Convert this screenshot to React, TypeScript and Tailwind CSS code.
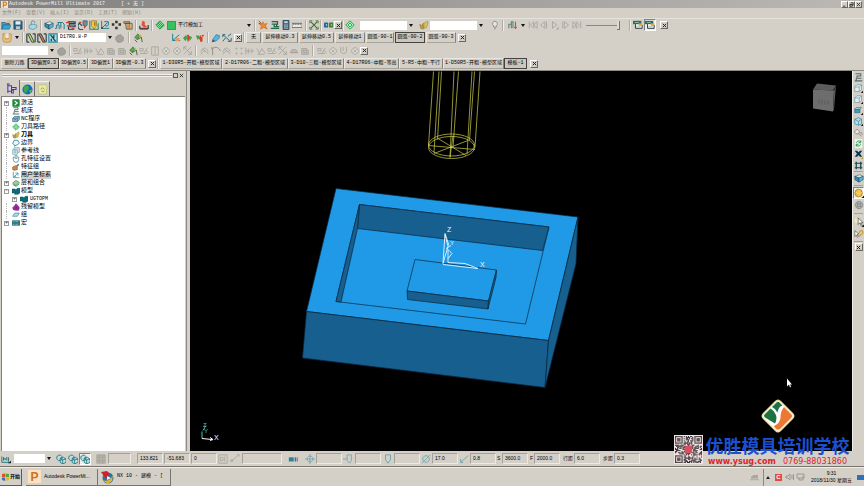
import type { ReactNode } from "react";
import clsx from "clsx";

const TEAL = "#1f7f95";
const DARK = "#1d3f55";
const GREY = "#a5a29c";

// All glyphs are drawn on a 12x12 grid
const glyphs: Record<string, ReactNode> = {
  app: (
    <>
      <rect width="12" height="12" fill="#f6e3c6" />
      <path d="M4 11V2h3a2.5 2.5 0 0 1 0 5H4" fill="none" stroke="#d27a1c" strokeWidth="2" />
    </>
  ),
  open: (
    <>
      <path d="M1 3h4l1 1h4v2H3l-2 5z" fill="#4aa3c4" stroke={DARK} strokeWidth=".7" />
      <path d="M3 6h9l-2 5H1z" fill="#39a4d6" stroke="#17618a" strokeWidth=".6" />
      <path d="M7 2l4-1v2" stroke="#e8b02c" fill="none" />
    </>
  ),
  save: (
    <>
      <path d="M1 1h9l1 1v9H1z" fill="#2a6180" stroke={DARK} strokeWidth=".7" />
      <rect x="3" y="1.5" width="6" height="4" fill="#e6ecee" />
      <rect x="3.5" y="7.5" width="5" height="3.5" fill="#b7cbd3" />
    </>
  ),
  lock: (
    <>
      <path d="M4 6V3a2 2 0 0 1 4 0v1" fill="none" stroke="#5f98a8" strokeWidth="1.2" />
      <path d="M1.5 6 6 5l4.5 1v3L6 11.5 1.5 10z" fill="#a5d6e6" stroke="#4b91a5" strokeWidth=".8" />
    </>
  ),
  block: (
    <>
      <path d="M1 4l6-2 4 2-5 2z" fill="#d7f0f5" stroke={DARK} strokeWidth=".6" />
      <path d="M1 4l5 2v5L1 8z" fill="#2f8fae" stroke={DARK} strokeWidth=".6" />
      <path d="M6 6l5-2v4l-5 3z" fill="#5fb5cc" stroke={DARK} strokeWidth=".6" />
    </>
  ),
  rapid: <path d="M0 10h2V6h2V3h5l2 2v6M7 3v7M5 6v5M3 3h3" fill="none" stroke={TEAL} strokeWidth="1.2" />,
  feed: (
    <>
      <path d="M2 2h9v2H4v2h7v2H3v3h7" fill="none" stroke={DARK} strokeWidth="1.3" />
      <path d="M0 3h5M1 7h5M7 10h3" stroke="#c9442c" strokeWidth="1.5" />
    </>
  ),
  toolred: (
    <>
      <path d="M6 1h5v5L9 8 6 6z" fill="#7d8f95" stroke={DARK} strokeWidth=".7" />
      <path d="M6 11A4 4 0 0 1 2 4l3 3" fill="none" stroke={DARK} strokeWidth="1.3" />
      <path d="M8 6v4M1 3h3" stroke="#d1402d" strokeWidth="1.6" />
    </>
  ),
  toolyel: (
    <>
      <path d="M3 1h6v6L6 11 3 7z" fill="#f2cb3a" stroke="#7d6a1d" strokeWidth=".7" />
      <path d="M1 1v10h10V4" fill="none" stroke="#2c8a5d" strokeWidth="1.3" />
      <path d="M7 2v5" stroke="#b3471f" strokeWidth="1.3" />
    </>
  ),
  axes: (
    <>
      <path d="M2 1v9h9M2 10l7-7M5 2h5v4M6 7h4" fill="none" stroke={TEAL} strokeWidth="1.2" />
      <circle cx="2.5" cy="9.5" r="1.2" fill="#2c4756" />
    </>
  ),
  nodes: <path d="M5 1h3v3H5zM9 4h3v3H9zM5 8h3v3H5zM1 4h3v3H1z" fill="#37312f" />,
  holder: (
    <>
      <path d="M1 2h7v2H1zM3 4h8v7H4z" fill="#d6b88a" stroke="#473c30" strokeWidth=".8" />
      <path d="M6 5v6M8 5v6" stroke="#b76a25" />
    </>
  ),
  simulate: (
    <>
      <path d="M1 7v3h10V6" fill="none" stroke={DARK} strokeWidth="1.4" />
      <path d="M4 1l3 1v4l3 2-4 1-3-3z" fill="#e0532f" />
      <path d="M1 11h10" stroke="#b63a2b" strokeWidth="1.4" />
    </>
  ),
  hatch: (
    <path
      d="M6 1l5 5-5 5-5-5zM3.5 3.5l5 5M5 2.5l5 5M2.5 5l4.5 4.5"
      fill="#8be59b"
      stroke="#169a39"
      strokeWidth="1.1"
    />
  ),
  square: <path d="M.5.5h11v11H.5z" fill="#38c25c" stroke="#1c8138" />,
  star: (
    <>
      <path d="M6 2l1.5 3 3.5-1-2 3 2 4-4-2-4 2 1-4-3-3 4 .5z" fill="#f08a24" stroke="#b8501c" strokeWidth=".5" />
      <path d="M1 1l3 3M1 4l2 1" stroke="#8d3b20" />
    </>
  ),
  machine: <path d="M2 2h7v3H5v3h6M1 10h10M8 5v3M2 5h2" fill="none" stroke="#23654b" strokeWidth="1.5" />,
  calc: (
    <>
      <path d="M2.5.5h7v11h-7z" fill="#547485" stroke={DARK} />
      <path d="M4 2.5h4" stroke="#fff" strokeWidth="1.5" />
      <path d="M4 6h4M4 8h4M4 10h4" stroke="#c9dbe2" strokeDasharray="1 .5" />
    </>
  ),
  ruler: <path d="M0 4h12v5H0zM2 4v2M4 4v2M6 4v2M8 4v2M10 4v2" fill="#e9e7e0" stroke="#4a4f50" strokeWidth=".8" />,
  cross: (
    <>
      <path d="M2 2l8 8M10 2l-8 8" stroke="#3e6b3d" strokeWidth="1.3" />
      <path d="M1 4V1h3M8 1h3v3M1 8v3h3M11 8v3H8" fill="none" stroke="#5b7d40" strokeWidth="1.2" />
    </>
  ),
  bino: (
    <>
      <rect y="3" width="5" height="6" rx="1" fill="#1e6a8f" />
      <rect x="6" y="3" width="5" height="6" rx="1" fill="#3c7e3c" />
      <circle cx="3" cy="6" r="1" fill="#cde7f0" />
      <circle cx="9" cy="6" r="1" fill="#f2d94c" />
    </>
  ),
  path: <path d="M6 1l5 5-5 5-5-5zM6 3.5L8.5 6 6 8.5 3.5 6z" fill="#b5efbe" stroke="#1fa546" strokeWidth="1.1" />,
  endmill: (
    <>
      <path d="M1 5l1 5 3 1 2-6-2-1-2 3z" fill="#b99a45" stroke="#86712c" strokeWidth=".6" />
      <path d="M6 4l4-3 1 2-2 6-3 1z" fill="#d9c05c" stroke="#9d822f" strokeWidth=".6" />
    </>
  ),
  bulb: (
    <path d="M6 1.5a3 3 0 0 1 1.5 5.5v1.5h-3V7A3 3 0 0 1 6 1.5zM5 10.5h2" fill="#e8e6e0" stroke="#7c7a75" strokeWidth=".9" />
  ),
  walk: (
    <>
      <path d="M1 10V5h3V2h2v8M4 5v5" fill="none" stroke="#5b8371" strokeWidth="1.3" />
      <path d="M9 2v6" stroke="#2e9c3c" strokeWidth="1.3" />
      <path d="M7 8h4l-2 3z" fill="#d33525" />
    </>
  ),
  first: <path d="M1.5 2v8M7 2L3 6l4 4zM11 2L7 6l4 4z" fill="none" stroke={GREY} />,
  back: <path d="M7 2L2 6l5 4zM9 2v8" fill="none" stroke={GREY} />,
  play: <path d="M3 2l5 4-5 4zM10 9v2H8z" fill="none" stroke={GREY} />,
  fwd: <path d="M2 2v8M4 2l5 4-5 4z" fill="none" stroke={GREY} />,
  last: <path d="M1 2l4 4-4 4zM5 2l4 4-4 4zM10.5 2v8" fill="none" stroke={GREY} />,
  panel: (
    <>
      <path d="M0 1h10v4H0z" fill="#2e6d63" />
      <path d="M3 5v5h8V6" fill="#f0ede3" stroke="#35424a" strokeWidth="1.2" />
      <path d="M2 3h5M4 8h5" stroke="#9cc5b0" />
      <path d="M7 4h4v3H7z" fill="#e7a22f" />
    </>
  ),
  cutter: (
    <>
      <path d="M1 1v7a3 3 0 0 0 3 3h4a3 3 0 0 0 3-3V1H8v6H4V1z" fill="#e9c27a" stroke="#b0803a" strokeWidth=".8" />
      <path d="M4 1v5h4V1" fill="#f3e8cf" />
    </>
  ),
  ballA: (
    <>
      <path d="M1 11V1M11 1v10M1 11h3M8 1h3" fill="none" stroke="#26454c" strokeWidth="1.4" />
      <path d="M2 1h3l5 10H7z" fill="#c5cf4f" stroke="#26454c" />
    </>
  ),
  ballB: (
    <>
      <path d="M1 11V1M11 1v10M1 11h3M8 1h3" fill="none" stroke="#26454c" strokeWidth="1.4" />
      <path d="M2 1h3l5 10H7z" fill="#d66b46" stroke="#26454c" />
    </>
  ),
  ballC: (
    <>
      <path d="M1 1h10v10H1z" fill="#a5dbe5" stroke="#2f8da2" strokeWidth="1.4" />
      <path d="M3 2l6 8M7 2v4M4 7v3" stroke="#1e3f49" strokeWidth="1.5" />
    </>
  ),
  blob: <path d="M3 3l4-1 3 3v4l-3 2H3L1 8V5z" fill="#a5a29c" stroke="#8d8a84" strokeWidth=".8" />,
  hand: (
    <>
      <path d="M2 5l4-4 2 3-3 4z" fill="#5aa44b" stroke="#2c6b30" strokeWidth=".7" />
      <path d="M5 8l5-3 1 6M2 8l3 3" fill="none" stroke="#4b6c3a" strokeWidth="1.2" />
      <path d="M9 2v3" stroke="#e3b52d" strokeWidth="1.5" />
    </>
  ),
  wpA: (
    <>
      <path d="M2 1v8h9M2 9l8-7" fill="none" stroke={TEAL} strokeWidth="1.2" />
      <path d="M5 6h5v4H5z" fill="#de9f65" />
    </>
  ),
  wpB: (
    <>
      <path d="M0 6l4-4 1 4-2 4zM7 3l4 2-3 5z" fill="#37a447" />
      <path d="M5 2h2l1 5-2 4-1-3z" fill="#d93a2b" />
    </>
  ),
  wpC: (
    <>
      <path d="M1 3h4l1 3-3 2z" fill="#39a548" />
      <path d="M6 3l5-1-2 4v4l-2 1-2-4z" fill="#d93a2b" />
      <path d="M7 3l2 2" stroke="#fff" />
    </>
  ),
  pencil: (
    <>
      <path d="M2 8l4-6 4 1v3L6 10z" fill="#5db2e2" stroke="#2377a0" strokeWidth=".8" />
      <path d="M1 11l1-3 3 2z" fill="#1e3c50" />
    </>
  ),
  tri: <path d="M1 2l9 8M1 10l3-4M7 4l4-3M7 10h4V6M1 5V2h3" fill="none" stroke="#2d6d7d" strokeWidth="1.2" />,
  g1: <path d="M1 3h4v3H1zM6 9l4-7M1 9h9M8 5l3 3" fill="none" stroke={GREY} />,
  g2: <path d="M1 2v8M1 6h9M7 3l3 3-3 3M4 3v6" fill="none" stroke={GREY} />,
  g3: <path d="M1 3l3 6 3-6 4 6M2 10h8" fill="none" stroke={GREY} />,
  g4: <path d="M2 3h6l2 2v5H2zM4 5h4v3H4z" fill="#c0bdb6" stroke={GREY} />,
  g5: <path d="M2 1h8v10H2zM6 1v10" fill="none" stroke={GREY} />,
  g6: <path d="M6 2a4 4 0 1 0 .1 0M4 4l4 4M4 8l4-4" fill="#dedbd4" stroke={GREY} />,
  g7: <path d="M1 1l9 9M10 1l-9 9M1 5V1h4M6 10h4V6" fill="none" stroke={GREY} />,
  g8: <path d="M1 7c3-6 6-6 9 0M1 10c3-5 6-5 9 0M3 3l4 4" fill="none" stroke={GREY} />,
  g9: <path d="M2 11V3c4-3 8-1 9 3M1 1v3" fill="none" stroke="#85827d" />,
  g10: <path d="M2 2h2v2H2zM8 2h2v2H8zM2 8h2v2H2zM8 8h2v2H8z" fill={GREY} />,
  g11: <path d="M1 8h10M2 8a4 4 0 0 1 8 0z" fill="#bcb9b3" stroke={GREY} />,
  g12: <path d="M2 1v6a4 4 0 0 0 7 0V1M5 1v5" fill="none" stroke={GREY} />,
  tree: <path d="M1 1h3M2 1v10M2 9h4M2 3h4v3M6 8h2v3H6zM6 5h5v2H6z" fill="none" stroke="#4a37a8" strokeWidth="1.1" />,
  globe: (
    <>
      <circle cx="6" cy="6" r="5.5" fill="#1769b5" />
      <path d="M3 2c3-1 6 1 4 4S5 10 4 10 0 6 3 2z" fill="#38a653" />
      <path d="M8 7l3-1-2 4z" fill="#6fc45f" />
    </>
  ),
  bin: (
    <>
      <path d="M1 1h10l-1 10H2z" fill="#e9eba5" stroke="#bcbf72" strokeWidth=".8" />
      <path d="M4 6l2-2 2 2M5 8h3" fill="none" stroke="#74a251" />
    </>
  ),
  active: (
    <>
      <rect x=".5" y=".5" width="11" height="11" rx="1" fill="#1f8b38" />
      <path d="M4 3l4 3-4 3" fill="none" stroke="#fff" strokeWidth="1.6" />
    </>
  ),
  mach2: <path d="M2 1h7v3H4v3h6M1 10.5h10M3 7v3" fill="none" stroke="#50676d" strokeWidth="1.4" />,
  nc: <path d="M1 5l3-3h7v5l-3 3H1zM1 5h7v5M8 5l3-3M3 7h3" fill="#8cbccb" stroke="#2a6479" strokeWidth=".9" />,
  loop: <path d="M3 2h6l2 4-3 3H6l-2 2V9L1 7z" fill="#eaf7fa" stroke="#2b8296" strokeWidth="1.2" />,
  pattern: <path d="M1 4h7v7H1zM3 4V1h8v7H8M3 6h3M3 8h3" fill="#d9ebef" stroke="#5a93a1" strokeWidth=".9" />,
  hole: <path d="M2 3h8M2 3v4a4 4 0 0 0 8 0V3M4 1h4M4 5h4" fill="none" stroke="#44707e" />,
  feature: (
    <>
      <path d="M1 6l4-2 3 2v4l-4 1-3-1z" fill="#cf8a38" stroke="#7b4c19" strokeWidth=".8" />
      <path d="M6 4l3-3 2 2-3 3z" fill="#4b8798" />
    </>
  ),
  ucs: <path d="M2 1v9h9M2 10l7-7M5 3h4v4M5 9V6" fill="none" stroke="#4d91a8" strokeWidth="1.2" />,
  layers: (
    <>
      <path d="M1 6l5-4 5 3-5 5z" fill="#9fd087" stroke="#396f46" strokeWidth=".8" />
      <path d="M1 8l5 3 5-4" fill="none" stroke="#2c7c8e" strokeWidth="1.3" />
    </>
  ),
  model: <path d="M0 3h5v2l3-3h4v7l-3 2H4V9H0z" fill="#0c6d78" stroke="#064b58" strokeWidth=".7" />,
  stock: (
    <path d="M6 1l3 3 2 3-1 4H6L2 10 1 7l3-3zM4 5l4 4M8 5L5 9" fill="#9c2ca8" stroke="#631a72" strokeWidth=".8" />
  ),
  group: <path d="M1 8l3-5h7l-3 5z" fill="#a8dcea" stroke="#2b7f98" strokeWidth=".9" />,
  macro: (
    <>
      <path d="M0 2h12v8H0z" fill="#2e7a82" />
      <path d="M2 4h8M2 8h8" stroke="#cde8e8" strokeDasharray="1 1" />
    </>
  ),
  cube: (
    <>
      <path d="M1 4l3-3h6v6l-3 3H1zM1 4h6v6M7 4l3-3" fill="#e0eef0" stroke="#5f8c96" strokeWidth=".8" />
      <path d="M12 9v3H9z" fill="#111" />
    </>
  ),
  cubeTop: (
    <>
      <path d="M1 4h7v5H1z" fill="#35a0c8" stroke="#37616d" strokeWidth=".8" />
      <path d="M1 4l2-2h7L8 4z" fill="#d9eef3" stroke="#37616d" strokeWidth=".8" />
      <path d="M12 9v3H9z" fill="#111" />
    </>
  ),
  iso: (
    <>
      <path d="M6 1l4 2v6l-4 2-5-2V3zM1 3l5 3 4-3M6 6v5" fill="#b7e3f0" stroke="#2780a1" strokeWidth=".9" />
      <path d="M12 9v3H9z" fill="#111" />
    </>
  ),
  zoom: <path d="M4 2a3 3 0 1 0 .1 0M6 7l4 4M8 7l2-1 1 3" fill="#e9e7e2" stroke="#77756f" />,
  refresh: (
    <>
      <rect x="1" y="0" width="10" height="12" fill="#edf5ec" />
      <path d="M3 5c1-3 5-3 6-1M9 2v3H6M9 7c-1 3-5 3-6 1M3 10V7h3" fill="none" stroke="#249448" strokeWidth="1.3" />
    </>
  ),
  xblue: (
    <>
      <path d="M1 1h3l2 2 2-2h3L8 5l3 4H8L6 7 4 9H1l3-4z" fill="#0d3352" />
      <path d="M12 9v3H9z" fill="#b8a325" />
    </>
  ),
  frame: <path d="M3 3h6v6H3zM1 3h2V1M9 1v2h2M1 9h2v2M11 9H9v2" fill="none" stroke="#0d4250" strokeWidth="1.6" />,
  shade: (
    <>
      <circle cx="5.5" cy="6" r="4.5" fill="#f0bd3b" stroke="#b0791e" />
      <path d="M2 5c3 2 5 2 8 0M6 2v8" fill="none" stroke="#fae49a" strokeWidth=".7" />
      <path d="M12 9v3H9z" fill="#111" />
    </>
  ),
  wire: (
    <path
      d="M6 1.5a4.5 4.5 0 1 0 .1 0M1.5 6h9M6 1.5v9M4 2v8M8 2v8M2 4h8M2 8h8"
      fill="none"
      stroke="#72777b"
      strokeWidth=".7"
    />
  ),
  select: (
    <>
      <path d="M1 2h5v5H1z" fill="#f1e9bb" />
      <path d="M5 1v8l2-2 2 4 1-1-2-3h3z" fill="#fff" stroke="#443f35" strokeWidth=".8" />
      <path d="M12 9v3H9z" fill="#111" />
    </>
  ),
  selkey: (
    <>
      <path d="M1 2v7l2-2 1 3 1-1-1-3h2z" fill="#fff" stroke="#544c3b" strokeWidth=".8" />
      <path d="M7 5a2 2 0 1 1 2 1L6 9" fill="none" stroke="#d0a02c" strokeWidth="1.5" />
    </>
  ),
  wp: (
    <>
      <path d="M1 10V3M1 10h10M3 8V4l2 3 2-3v4M9 4v5" fill="none" stroke="#2f7c85" strokeWidth="1.2" />
      <path d="M8 11h4V8z" fill="#222" />
    </>
  ),
  planes: (
    <path
      d="M1 3l4-2 2 2v4L3 8 1 6zM5 5l4-1 3 2v4l-4 2-3-2zM5 5l3 2 4-1M8 7v5"
      fill="#bfe2e4"
      stroke="#1e7580"
    />
  ),
  grid: <path d="M1 1h10v10H1zM4 1v10M8 1v10M1 4h10M1 8h10" fill="#b8b5ae" stroke={GREY} />,
  lines: <path d="M1 1h10v10H1zM3 4h3v4H3zM8 3v6" fill="none" stroke={GREY} />,
  diag: <path d="M1 7h2v2H1zM3 8l6-6M8 1h3v2" fill="none" stroke={GREY} />,
  speed: (
    <>
      <path d="M1 4h5v5H1z" fill="#2e8094" />
      <path d="M7 4v5M9 4v5M11 4v5" stroke="#1f5a8c" />
    </>
  ),
  target: <path d="M6 2.5a3.5 3.5 0 1 0 .1 0M6 0v12M0 6h12" fill="none" stroke="#6ba3ad" />,
  gauge: <path d="M0 6h5M5 1h5v7l-2 3-3-3z" fill="none" stroke="#6ba3ad" />,
  tip: <path d="M3 1h6v6l-3 4-3-4z" fill="none" stroke="#6ba3ad" strokeWidth="1.1" />,
  dia: <path d="M6 2a4 4 0 1 0 .1 0M1 11L11 1" fill="none" stroke="#6ba3ad" />,
  radius: <path d="M2 6v4h3M2 10l9-8" fill="none" stroke="#6ba3ad" strokeWidth="1.1" />,
};

function Glyph({ name, className = "size-[11px]" }: { name: string; className?: string }) {
  return (
    <svg viewBox="0 0 12 12" className={clsx("shrink-0", className)} aria-hidden="true">
      {glyphs[name]}
    </svg>
  );
}

interface ToolProps {
  icon: string;
  w?: string;
  pressed?: boolean;
}

function Tool({ icon, w = "w-3", pressed }: ToolProps) {
  return (
    <button
      aria-label={icon}
      className={clsx(
        "flex h-3 shrink-0 items-center justify-center",
        w,
        pressed && "border border-t-[#808080] border-l-[#808080] border-r-white border-b-white bg-[#efede8]"
      )}
    >
      <Glyph name={icon} className="size-[10px]" />
    </button>
  );
}

const Tools = ({ icons, w }: { icons: string[]; w?: string }) => (
  <>
    {icons.map((icon, i) => (
      <Tool key={i} icon={icon} w={w} />
    ))}
  </>
);

// Groove between two tool groups
const Sep = ({ w = "w-1" }: { w?: string }) => (
  <span className={clsx("flex h-[11px] shrink-0 justify-center", w)}>
    <span className="w-px bg-[#b0aca4]" />
    <span className="w-px bg-[#efede9]" />
  </span>
);

const Gap = ({ w }: { w: string }) => <span className={clsx("shrink-0", w)} />;

function CloseX() {
  return (
    <button
      aria-label="close"
      className="flex size-2 shrink-0 items-center justify-center border border-t-white border-l-white border-r-[#6b6862] border-b-[#6b6862] bg-[#d4d0c8]"
    >
      <svg viewBox="0 0 6 6" className="size-[5px]">
        <path d="M1 1l4 4M5 1L1 5" stroke="#222" strokeWidth="1.2" />
      </svg>
    </button>
  );
}

const Arrow = ({ w = "w-2" }: { w?: string }) => (
  <span className={clsx("pointer-events-none flex shrink-0 items-center justify-center", w)}>
    <svg viewBox="0 0 4 3" className="h-[3px] w-1">
      <path d="M0 0h4L2 3z" fill="#111" />
    </svg>
  </span>
);

function Combo({ label, value = "", w }: { label: string; value?: string; w: string }) {
  return (
    <>
      <select
        aria-label={label}
        className={clsx("h-[9px] shrink-0 appearance-none bg-white pl-[2px] leading-[9px] text-black", w)}
      >
        <option>{value}</option>
      </select>
      <Arrow />
    </>
  );
}

function TextButton({ text, w, pressed }: { text: string; w: string; pressed?: boolean }) {
  return (
    <button
      className={clsx(
        "flex h-[11px] shrink-0 items-center justify-center border whitespace-nowrap text-black",
        w,
        pressed
          ? "border-[#45423e] bg-[#cbc7bf]"
          : "border-t-[#e9e7e2] border-l-[#e9e7e2] border-r-[#85827b] border-b-[#a8a49c]"
      )}
    >
      {text}
    </button>
  );
}

const editButtons = [
  { text: "无", w: "w-[15px]" },
  { text: "延伸移动0.3", w: "w-[36px]" },
  { text: "延伸移动0.5", w: "w-[35px]" },
  { text: "延伸移动1", w: "w-[30px]" },
  { text: "圆弧-90-1", w: "w-[28px]" },
  { text: "圆弧-90-2", w: "w-[30px]", pressed: true },
  { text: "圆弧-90-3", w: "w-[30px]" },
];

const offsetButtons = [
  { text: "删除刀路", w: "w-[27px]" },
  { text: "3D偏置0.3", w: "w-[31px]", pressed: true },
  { text: "3D偏置0.5", w: "w-[29px]" },
  { text: "3D偏置1", w: "w-[25px]" },
  { text: "3D偏置-0.3", w: "w-[33px]" },
];

const templateButtons = [
  { text: "1-D30R5-开粗-模型区域", w: "w-[62px]" },
  { text: "2-D17R06-二粗-模型区域", w: "w-[66px]" },
  { text: "3-D10-三粗-模型区域", w: "w-[56px]" },
  { text: "4-D17R06-中粗-等高", w: "w-[55px]" },
  { text: "5-R5-中粗-平行", w: "w-[44px]" },
  { text: "1-D50R5-开粗-模型区域", w: "w-[61px]" },
  { text: "模板-1", w: "w-[23px]", pressed: true },
];

const menus = ["文件(F)", "查看(V)", "插入(I)", "显示(D)", "工具(T)", "帮助(H)"];

const treeItems = [
  { icon: "active", text: "激活", box: "+" },
  { icon: "mach2", text: "机床" },
  { icon: "nc", text: "NC程序" },
  { icon: "path", text: "刀具路径" },
  { icon: "endmill", text: "刀具", box: "+", bold: true },
  { icon: "loop", text: "边界" },
  { icon: "pattern", text: "参考线" },
  { icon: "hole", text: "孔特征设置" },
  { icon: "feature", text: "特征组" },
  { icon: "ucs", text: "用户坐标系", selected: true },
  { icon: "layers", text: "层和组合", box: "+" },
  { icon: "model", text: "模型", box: "-" },
  { icon: "model", text: "UGTOPM", box: "+", child: true },
  { icon: "stock", text: "残留模型" },
  { icon: "group", text: "组" },
  { icon: "macro", text: "宏", box: "+" },
];

function Toolbars() {
  return (
    <div className="flex flex-col">
      <div className="flex h-[13px] items-center border-t border-[#e6e3dd]">
        <Tool icon="open" />
        <Tool icon="save" w="w-[11px]" />
        <Sep />
        <Tool icon="lock" />
        <Sep />
        <Tools icons={["block", "rapid", "feed"]} w="w-[11px]" />
        <Gap w="w-px" />
        <Tools icons={["toolred", "toolyel", "axes"]} w="w-[11px]" />
        <Tools icons={["nodes", "holder"]} />
        <Sep />
        <Tool icon="simulate" />
        <Sep />
        <Tool icon="hatch" />
        <Glyph name="square" className="ml-px size-[9px]" />
        <select
          aria-label="策略"
          className="ml-[2px] h-[11px] w-[67px] shrink-0 appearance-none leading-[11px] text-black"
        >
          <option>平行模加工</option>
        </select>
        <Arrow />
        <Sep />
        <Tools icons={["star", "machine"]} />
        <Tool icon="calc" w="w-[9px]" />
        <Tool icon="ruler" w="w-[14px]" />
        <Sep />
        <Tool icon="cross" w="w-[11px]" />
        <Sep />
        <Tool icon="bino" w="w-[11px]" />
        <CloseX />
        <Sep w="w-[2px]" />
        <Tool icon="path" />
        <Gap w="w-1" />
        <Combo label="刀具路径" w="w-[47px]" />
        <Gap w="w-[3px]" />
        <Tool icon="endmill" />
        <Combo label="刀具" w="w-[47px]" />
        <Gap w="w-1" />
        <Tool icon="bulb" />
        <Sep />
        <Gap w="w-[2px]" />
        <Tool icon="walk" />
        <Arrow />
        <Tools icons={["first", "back", "play", "fwd", "last"]} w="w-[11px]" />
        <input
          type="range"
          aria-label="速度"
          defaultValue={100}
          className="ml-1 h-[9px] w-[34px] shrink-0 appearance-none bg-[linear-gradient(#8b8882,#8b8882)] bg-[length:100%_1px] bg-center bg-no-repeat [&::-webkit-slider-thumb]:h-[9px] [&::-webkit-slider-thumb]:w-[3px] [&::-webkit-slider-thumb]:appearance-none [&::-webkit-slider-thumb]:border-r [&::-webkit-slider-thumb]:border-b [&::-webkit-slider-thumb]:border-[#77746e] [&::-webkit-slider-thumb]:bg-[#dedbd4]"
        />
        <Gap w="w-2" />
        <Sep />
        <Tool icon="panel" />
        <Tool icon="panel" pressed />
        <Gap w="w-1" />
        <CloseX />
      </div>

      <div className="flex h-[13px] items-center">
        <Gap w="w-px" />
        <Tool icon="cutter" />
        <Arrow />
        <Sep />
        <Tools icons={["ballA", "ballB", "ballC"]} w="w-[11px]" />
        <Combo label="当前刀具" value="D17R0.8-P" w="w-[48px]" />
        <Tool icon="blob" />
        <Sep w="w-[6px]" />
        <Tool icon="hand" />
        <Gap w="w-[26px]" />
        <Tools icons={["wpA", "wpB", "wpC"]} />
        <Sep />
        <Tools icons={["pencil", "tri"]} w="w-[11px]" />
        <Gap w="w-[2px]" />
        <CloseX />
        <Sep />
        <div className="flex gap-px">
          {editButtons.map((b) => (
            <TextButton key={b.text} {...b} />
          ))}
        </div>
        <Gap w="w-[2px]" />
        <CloseX />
      </div>

      <div className="flex h-[13px] items-center">
        <Gap w="w-[2px]" />
        <Combo label="工作平面" w="w-[46px]" />
        <Tool icon="blob" />
        <Sep />
        <Tools icons={["g1", "g2", "g3", "g4", "g4", "hand"]} w="w-[11px]" />
        <Tools icons={["g1", "g5", "g6", "g6", "g7"]} w="w-[11px]" />
        <Sep w="w-[6px]" />
        <Tools icons={["g8", "g9", "g8"]} w="w-[11px]" />
        <Gap w="w-px" />
        <Tools icons={["g10", "g2", "g3", "g1", "g7", "g11", "g4"]} w="w-[11px]" />
        <Sep w="w-[6px]" />
        <Tools icons={["g1", "g6", "g12", "g6"]} w="w-[11px]" />
        <CloseX />
      </div>

      <div className="flex h-[14px] items-center border-b border-[#8c8983]">
        <Gap w="w-px" />
        <div className="flex">
          {offsetButtons.map((b) => (
            <TextButton key={b.text} {...b} />
          ))}
        </div>
        <Gap w="w-[2px]" />
        <CloseX />
        <Sep />
        <div className="flex">
          {templateButtons.map((b) => (
            <TextButton key={b.text} {...b} />
          ))}
        </div>
        <Gap w="w-[3px]" />
        <CloseX />
      </div>
    </div>
  );
}

function Explorer() {
  return (
    <aside className="flex w-[187px] shrink-0 flex-col border-r border-[#8d8a84] pl-px">
      <div className="flex h-[9px] items-center gap-px pr-[2px] pl-px">
        <div className="h-[3px] grow border-y border-[#f4f2ee] bg-[#a9a59d]" />
        <button aria-label="dock" className="size-[5px] border border-[#5e5b56]" />
        <button aria-label="close" className="size-[5px]">
          <svg viewBox="0 0 6 6" className="size-full">
            <path d="M1 1l4 4M5 1L1 5" stroke="#222" />
          </svg>
        </button>
      </div>
      <div className="flex h-4 items-end pl-[2px]">
        {["tree", "globe", "bin"].map((tab, i) => (
          <button
            key={tab}
            aria-label={tab}
            className={clsx(
              "flex items-center justify-center border-r border-[#6f6c66]",
              i === 0 ? "h-4 w-[17px]" : "h-[15px] w-[15px] border-t border-t-[#f4f2ee]"
            )}
          >
            <Glyph name={tab} />
          </button>
        ))}
      </div>
      <ul className="mr-px flex grow flex-col border-t border-l border-[#85827c] bg-white pt-[2px] text-[6px] text-black">
        {treeItems.map((item, i) => (
          <li key={i} className={clsx("flex h-2 items-center", item.child ? "pl-[10px]" : "pl-[2px]")}>
            <span className="flex w-2 items-center">
              {item.box ? (
                <button
                  aria-label="toggle"
                  className="flex size-[5px] items-center justify-center border border-[#9b9b9b] text-[5px] leading-none text-[#333]"
                >
                  {item.box}
                </button>
              ) : (
                <span className="ml-[2px] h-2 w-0 border-l border-dotted border-[#b5b5b5]" />
              )}
            </span>
            <Glyph name={item.icon} className="size-2" />
            <span
              className={clsx(
                "ml-px leading-[8px] whitespace-nowrap",
                item.bold && "font-bold",
                item.selected && "bg-[#d4d0c8]",
                item.child && "pl-px text-[5px]"
              )}
            >
              {item.text}
            </span>
          </li>
        ))}
      </ul>
    </aside>
  );
}

function Viewport() {
  return (
    <main className="min-w-0 grow bg-black">
      <svg
        viewBox="190 72 662 379"
        className="size-full"
        fontFamily="'Liberation Sans', sans-serif"
        fontSize="7"
        strokeLinejoin="round"
      >
        {/* Block with pocket */}
        <g stroke="#082840" strokeWidth=".7">
          <path d="M336 189L578 217.5 548.5 341 306.5 312z" fill="#209ae6" />
          <path d="M306.5 312L548.5 341 545 388 302.5 358.5z" fill="#175f8e" />
          <path d="M578 217.5L576 264 545 388 548.5 341z" fill="#175f8e" />
          <path d="M359.5 205L549 227.5 525.5 324.5 336 302z" fill="#209ae6" />
          <path d="M359.5 205L549 227.5 542.5 251 357.5 229z" fill="#175f8e" />
          <path d="M359.5 205L357.5 229 341 302.5 336 302z" fill="#175f8e" />
          <path d="M415 260L496.5 270.5 488.5 301.5 407 291.5z" fill="#209ae6" />
          <path d="M407 291.5L488.5 301.5 488 309.5 407.5 300z" fill="#175f8e" />
          <path d="M496.5 270.5L496 278 488 309.5 488.5 301.5z" fill="#175f8e" />
        </g>

        {/* Wireframe tool */}
        <g fill="none" stroke="#d3d34c" strokeWidth=".7">
          <path d="M433.5 72L428.5 146M439 72L434 153M441.5 72L437.5 140M454 72L450 158M458.5 72L453 148M472 72L467 155M474.5 72L469.5 141M480 72L475 148" />
          <ellipse cx="451.5" cy="148" rx="23" ry="11" />
          <ellipse cx="451.5" cy="145.5" rx="23" ry="11" />
          <path d="M428.5 146L475 150M434 154L468 141M438 139L466 156M450 158L453 136M451 148h1" />
        </g>

        {/* Workplane axes */}
        <g fill="none" stroke="#e9f6ff" strokeWidth=".9">
          <path d="M443 264L445 234 449 246M443 264L448 247 445 235M443 265L478 269 465 264 448 263M448 263V250l4 4-4 5M446 249l5-3" />
        </g>
        <g fill="#e9f6ff">
          <text x="447" y="232">Z</text>
          <text x="450" y="245" fontSize="6">Y</text>
          <text x="480" y="267">X</text>
        </g>

        {/* Corner triad */}
        <path d="M202 439V432M203 431l3-5" stroke="#4cc7b4" fill="none" />
        <path d="M202 439l10 1M210 438l3 2-3 1" stroke="#fff" fill="none" />
        <text x="203" y="427" fill="#4cc7b4" fontSize="6">Z</text>
        <text x="204" y="433" fill="#4cc7b4" fontSize="6">Y</text>
        <text x="214" y="440" fill="#fff">X</text>

        {/* View cube */}
        <path d="M817 84l19 2-3 5-20-1z" fill="#5c5c5c" />
        <path d="M813 90l21 1-1 21-20-3z" fill="#6d6d6d" />
        <path d="M834 91l2-5-2 24-1 2z" fill="#575757" />
        <path d="M819 100v5M822 100v5M825 101v4M828 101v4" stroke="#5a5a5a" />

        <path d="M787 379v8l2-2 1 3 1-1-1-2h2z" fill="#fff" />
      </svg>
    </main>
  );
}

function ViewBar() {
  return (
    <div className="flex w-3 shrink-0 flex-col items-center border-l border-[#efede8] pt-px">
      {["mach2", "cube", "cube", "cubeTop", "iso", "zoom", "refresh", "xblue", "frame"].map((icon, i) => (
        <button key={i} aria-label={icon} className="flex h-[11px] items-center">
          <Glyph name={icon} className="size-[9px]" />
        </button>
      ))}
      <hr className="w-[9px] border-[#a5a19a]" />
      <Tool icon="block" w="w-[11px]" />
      <hr className="my-px w-[9px] border-[#a5a19a]" />
      <Tool icon="shade" w="w-[11px]" pressed />
      <Tool icon="wire" w="w-[11px]" />
      <hr className="my-[2px] w-[9px] border-[#a5a19a]" />
      <Tool icon="select" w="w-[11px]" />
      <Tool icon="selkey" w="w-[11px]" />
      <hr className="my-px w-[9px] border-[#a5a19a]" />
      <CloseX />
    </div>
  );
}

function Field({ label, value = "", w = "w-[26px]" }: { label: string; value?: string; w?: string }) {
  return (
    <input
      aria-label={label}
      readOnly
      value={value}
      className={clsx(
        "h-[11px] shrink-0 border border-t-[#a5a199] border-l-[#a5a199] border-r-[#eceae5] border-b-[#eceae5] bg-transparent pb-[2px] pl-[2px] leading-none",
        w
      )}
    />
  );
}

function StatusBar() {
  return (
    <div className="flex h-4 shrink-0 items-center border-b border-[#77746e] font-['Liberation_Sans','Noto_Sans_CJK_SC',sans-serif] text-black">
      <Tool icon="wp" />
      <Gap w="w-[2px]" />
      <Combo label="用户坐标系" w="w-[31px]" />
      <Gap w="w-[2px]" />
      <Tools icons={["planes", "planes"]} />
      <Tool icon="planes" pressed />
      <Gap w="w-1" />
      <Tool icon="grid" />
      <Gap w="w-px" />
      <Field label="网格" w="w-[23px]" />
      <Gap w="w-[6px]" />
      <Field label="X" value="133.821" />
      <Gap w="w-px" />
      <Field label="Y" value="-51.683" />
      <Gap w="w-px" />
      <Field label="Z" value="0" />
      <Tools icons={["lines", "diag"]} />
      <Gap w="w-px" />
      <Field label="距离" w="w-[40px]" />
      <Gap w="w-[5px]" />
      <Tool icon="speed" />
      <Gap w="w-[5px]" />
      <Tool icon="target" />
      <Field label="公差" />
      <Tool icon="gauge" />
      <Gap w="w-px" />
      <Field label="余量" />
      <Gap w="w-px" />
      <Tool icon="tip" />
      <Field label="刀尖" />
      <Tool icon="dia" />
      <Field label="直径" value="17.0" />
      <Tool icon="radius" />
      <Field label="刀尖半径" value="0.8" />
      <span className="w-[6px] pl-px">S</span>
      <Field label="转速" value="3600.0" />
      <span className="w-[6px] pl-[2px]">F</span>
      <Field label="进给" value="2000.0" />
      <span className="w-[14px] pl-[3px] whitespace-nowrap">行距</span>
      <Field label="行距" value="6.0" />
      <span className="w-[14px] pl-[3px] whitespace-nowrap">步距</span>
      <Field label="步距" value="0.3" />
    </div>
  );
}

function TaskBar() {
  return (
    <footer className="flex h-[19px] shrink-0 items-center border-t border-[#efede8] font-['Liberation_Sans','Noto_Sans_CJK_SC',sans-serif] text-black">
      <button className="flex h-[17px] w-[22px] items-center gap-px border-r border-b border-[#5d5a55] pl-px font-bold whitespace-nowrap">
        <svg viewBox="0 0 8 8" className="size-2 shrink-0">
          <path d="M1 1l3-.5V4H1z" fill="#d9572c" />
          <path d="M4.5.5L8 1v3H4.5z" fill="#5ca437" />
          <path d="M1 4.5h3V8L1 7z" fill="#3a72c2" />
          <path d="M4.5 4.5H8V7l-3.5 1z" fill="#e3b72b" />
        </svg>
        开始
      </button>
      <button className="ml-1 flex h-[17px] w-[72px] items-center border-r border-b border-[#77746e] pl-[2px] whitespace-nowrap">
        <span className="mr-[3px] flex size-[13px] items-center justify-center bg-[#fae3c4] text-[12px] leading-none font-bold text-[#cf7416]">
          P
        </span>
        Autodesk PowerMi...
      </button>
      <button className="flex h-[17px] w-[73px] items-center border-r border-b border-[#77746e] pl-[2px] font-['Liberation_Mono','Noto_Sans_CJK_SC',monospace] whitespace-nowrap">
        <svg viewBox="0 0 14 14" className="mr-[3px] size-[14px]">
          <circle cx="8" cy="8" r="5.5" fill="#2179a8" />
          <path d="M2 10c4 2 9 0 11-5l-1 6-4 3z" fill="#e8b22e" />
          <path d="M1 2l6-1 3 3-4 5z" fill="#c9242d" />
          <path d="M7 6l4 2-4 2z" fill="#e9f3f4" />
        </svg>
        NX 10 - 建模 - [
      </button>

      <div className="ml-auto flex h-full items-center">
        <svg viewBox="0 0 10 8" className="mr-1 h-[7px] w-[9px]">
          <path d="M1 3l3-2h5v4H1zM0 6h10v1H0z" fill="#a9a69f" />
        </svg>
        <div className="flex h-[17px] items-center border-l border-[#8b8882] pl-[2px]">
          <svg viewBox="0 0 4 3" className="h-[3px] w-1">
            <path d="M0 3h4L2 0z" fill="#222" />
          </svg>
          <span className="ml-[5px] flex size-[7px] items-center justify-center bg-[#e14a45] text-[6px] leading-none font-bold text-white">
            C
          </span>
          <svg viewBox="0 0 20 8" className="ml-[3px] h-2 w-5" fill="none" stroke="#96938d" strokeWidth=".9">
            <path d="M1 3h2l2-2v6L3 5H1zM7 2v4M8.5 1v6M12 1h7v4h-7zM14 5v2h4V3" />
          </svg>
          <div className="ml-[3px] flex w-[47px] flex-col items-center leading-[7px] whitespace-nowrap">
            <span>9:31</span>
            <span>2018/11/30 星期五</span>
          </div>
          <span className="ml-[2px] h-[5px] w-[7px] bg-[#2e70bd]" />
        </div>
      </div>
    </footer>
  );
}

const QR_SIZE = 25;

function isDark(x: number, y: number) {
  const corners = [
    [0, 0],
    [QR_SIZE - 7, 0],
    [0, QR_SIZE - 7],
  ];
  for (const [cx, cy] of corners) {
    const dx = x - cx;
    const dy = y - cy;
    if (dx >= -1 && dx <= 7 && dy >= -1 && dy <= 7) {
      const ring = Math.max(Math.abs(dx - 3), Math.abs(dy - 3));
      return ring === 3 || ring <= 1;
    }
  }
  return (x * x * 7 + y * 13 + x * y * 5 + ((x * 31) ^ (y * 17))) % 7 < 4;
}

function QrCode() {
  const cells: ReactNode[] = [];
  for (let y = 0; y < QR_SIZE; y++) {
    for (let x = 0; x < QR_SIZE; x++) {
      if (isDark(x, y)) cells.push(<rect key={`${x}-${y}`} x={x} y={y} width="1" height="1" />);
    }
  }
  return (
    <svg viewBox="-1 -1 27 27" className="mb-[3px] size-[29px]">
      <rect x="-1" y="-1" width="27" height="27" fill="#f2e4e4" />
      <g fill="#241c20">{cells}</g>
      <rect x="9" y="9" width="7" height="7" rx="1" fill="#df4b60" />
    </svg>
  );
}

function Watermark() {
  return (
    <div className="pointer-events-none absolute right-[14px] bottom-[19px] flex items-end gap-[2px]">
      <QrCode />
      <div className="flex w-[145px] flex-col items-center">
        <svg viewBox="0 0 34 34" className="mb-px size-[34px]">
          <path d="M14 2q3-3 6 0l12 12q3 3 0 6L20 32q-3 3-6 0L2 20q-3-3 0-6z" fill="#e8dfa0" />
          <path d="M15 3q2-2 4 0l12 12q2 2 0 4L19 31q-2 2-4 0L3 19q-2-2 0-4z" fill="#fff" />
          <path d="M11 8l4.5-4.5q1.500-1.500 3 0l3 3q-4 1-5 7-2-4-5.500-5.500z" fill="#1d7440" />
          <path d="M9.500 9.500q5 3 6 9 0 3-1.500 6L4 18.500q-2-2 0-3.500z" fill="#1d7440" />
          <path d="M23 8l7.500 7.500q1.500 1.500 0 3L19 30q-2 1.500-4 0-1-1-2-3 6-3 6.500-8 0-7 3.500-11z" fill="#ee7831" />
        </svg>
        <p className="font-['Noto_Sans_CJK_SC',sans-serif] text-[18px] leading-[22px] font-bold whitespace-nowrap text-[#1d50cf]">
          优胜模具培训学校
        </p>
        <p className="flex w-full items-center justify-between px-[3px] font-['DejaVu_Sans',sans-serif] text-[8px] leading-[11px] whitespace-nowrap text-[#dc2430]">
          <span className="font-bold">www.ysug.com</span>
          <span>0769-88031860</span>
        </p>
      </div>
    </div>
  );
}

export default function App() {
  return (
    <div className="relative flex h-screen flex-col overflow-hidden bg-[#d4d0c8] font-['Liberation_Mono','Noto_Sans_CJK_SC',monospace] text-[5px] leading-none text-[#1c1a18]">
      <header className="flex h-2 shrink-0 items-center bg-gradient-to-r from-[#828080] to-[#bcb8b4] pr-[2px] pl-px text-[#dedad3]">
        <Glyph name="app" className="mr-px size-[7px]" />
        <span className="font-bold">Autodesk PowerMill Ultimate 2017</span>
        <span className="ml-[16px] font-bold whitespace-pre">[ + 无 ]</span>
        <div className="ml-auto flex">
          {["M1 5h3", "M1 3h3v2H1zM2 1h3v3", "M1 1l4 4M5 1L1 5"].map((d) => (
            <button
              key={d}
              aria-label="window"
              className="flex h-[7px] w-[7px] items-center justify-center border border-t-white border-l-white border-r-[#6b6862] border-b-[#6b6862] bg-[#d4d0c8]"
            >
              <svg viewBox="0 0 6 6" className="size-[5px]">
                <path d={d} fill="none" stroke="#222" />
              </svg>
            </button>
          ))}
        </div>
      </header>
      <nav className="flex h-[10px] shrink-0 items-center gap-[5px] pl-[2px] text-[#8d8982]">
        {menus.map((m) => (
          <button key={m}>{m}</button>
        ))}
      </nav>
      <Toolbars />
      <div className="flex min-h-0 grow">
        <Explorer />
        <div className="w-[3px] shrink-0" />
        <Viewport />
        <ViewBar />
      </div>
      <StatusBar />
      <TaskBar />
      <Watermark />
    </div>
  );
}
